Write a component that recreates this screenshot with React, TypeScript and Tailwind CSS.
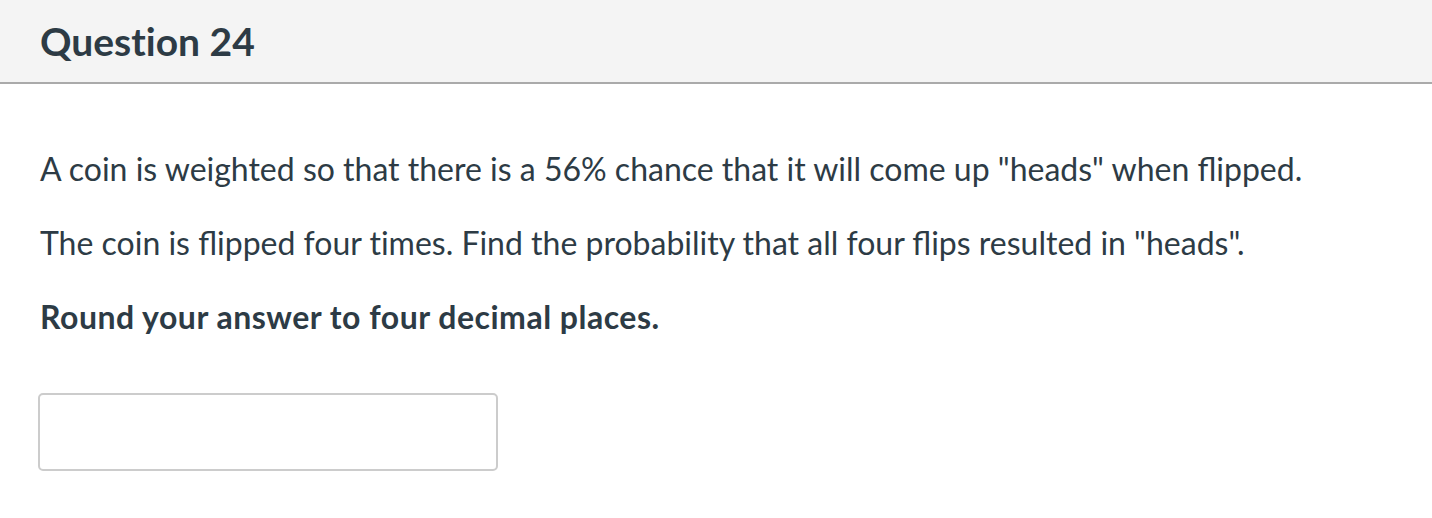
export default function App() {
  return (
    <div className="min-h-[518px] bg-white font-['Lato',sans-serif] text-[#2d3b45]">
      <div className="h-[84px] bg-[#f4f4f4] border-b-2 border-[#aaaaaa] flex items-center px-10">
        <h2 className="text-[39px] font-bold leading-none">Quest&zwnj;ion 24</h2>
      </div>
      <div className="px-10 pt-[65px]">
        <p className="text-[32px] leading-[40px]">
          A coin is weighted so that there is a 56% chance that it will come up "heads" when flipped.
        </p>
        <p className="text-[32px] leading-[40px] mt-[34px]">
          The coin is flipped four t&zwnj;imes. Find the probability that all four flips resulted in "heads".
        </p>
        <p className="text-[32px] leading-[40px] mt-[34px] font-bold tracking-[0.5px]">
          Round your answer to four decimal places.
        </p>
        <input
          type="text"
          className="block mt-[56px] -ml-0.5 w-[460px] h-[78px] border-2 border-[#cccccc] rounded-[5px] bg-white outline-none"
        />
      </div>
    </div>
  );
}
